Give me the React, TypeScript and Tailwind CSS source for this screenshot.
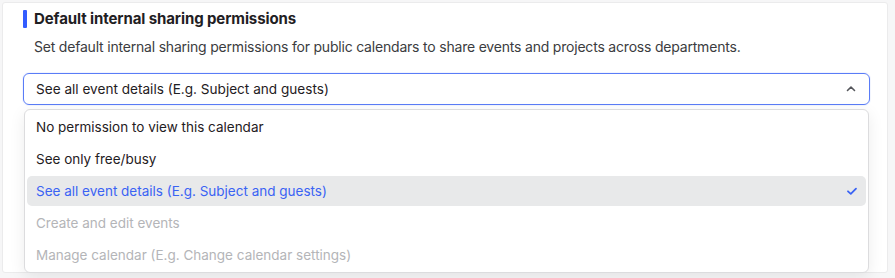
import React from "react";

const items = [
  { label: "No permission to view this calendar", state: "normal" },
  { label: "See only free/busy", state: "normal" },
  { label: "See all event details (E.g. Subject and guests)", state: "selected" },
  { label: "Create and edit events", state: "disabled" },
  { label: "Manage calendar (E.g. Change calendar settings)", state: "disabled" },
];

export default function App() {
  return (
    <div
      className="w-[895px] h-[278px] bg-[#f6f6f7] pt-[2px] pl-[2px] pr-[7px] pb-[5px] overflow-hidden"
      style={{ fontFamily: "Inter, 'Noto Sans', sans-serif" }}
    >
      <div className="relative h-full bg-white border border-[#ebebec] rounded-[3px] pl-[20px] pr-[17px] pt-[6px]">
        <div className="flex items-center gap-[7px] h-[18px] mt-[1px]">
          <div className="w-[4px] h-[18px] bg-[#335cff] rounded-[1px]" />
          <div className="text-[15px] font-bold text-[#1f2023] leading-[18px] tracking-[-0.1px]">
            Default internal sharing permissions
          </div>
        </div>
        <div className="mt-[10px] pl-[11px] text-[14px] leading-[18px] text-[#3b3c40] tracking-[-0.2px]">
          Set default internal sharing permissions for public calendars to share events and projects across departments.
        </div>
        <div className="relative mt-[17px]">
          <div className="h-[32px] border border-[#5a7cf7] rounded-[6px] flex items-center justify-between pl-[12px] pr-[12px] text-[13.6px] text-[#1f2023] shadow-[0_0_0_1px_rgba(90,124,247,0.08)]">
            <span>See all event details (E.g. Subject and guests)</span>
            <svg width="12" height="12" viewBox="0 0 12 12" fill="none">
              <path d="M2.5 7.5L6 4L9.5 7.5" stroke="#55565b" strokeWidth="1.6" strokeLinecap="round" strokeLinejoin="round" />
            </svg>
          </div>
          <div className="absolute left-[1px] right-[1px] top-[36px] bg-white border border-[#dcdcde] rounded-[6px] shadow-[0_4px_16px_rgba(0,0,0,0.08)] p-[2px] flex flex-col gap-[2px] z-10">
            {items.map((it) => (
              <div
                key={it.label}
                className={
                  "h-[30px] flex items-center justify-between pl-[9px] pr-[8px] rounded-[5px] text-[13.5px] " +
                  (it.state === "selected"
                    ? "bg-[#e8e9ea] text-[#3a63f4]"
                    : it.state === "disabled"
                    ? "text-[#b4b5b8]"
                    : "text-[#1f2023]")
                }
              >
                <span>{it.label}</span>
                {it.state === "selected" && (
                  <svg width="12" height="12" viewBox="0 0 12 12" fill="none">
                    <path d="M2 6.3L4.8 8.8L10 3.6" stroke="#3a63f4" strokeWidth="1.8" strokeLinecap="round" strokeLinejoin="round" />
                  </svg>
                )}
              </div>
            ))}
          </div>
        </div>
      </div>
    </div>
  );
}
